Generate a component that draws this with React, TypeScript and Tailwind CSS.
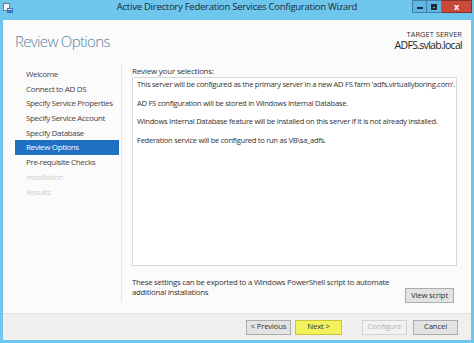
const navItems = [
  { label: "Welcome", state: "normal" },
  { label: "Connect to AD DS", state: "normal" },
  { label: "Specify Service Properties", state: "normal" },
  { label: "Specify Service Account", state: "normal" },
  { label: "Specify Database", state: "normal" },
  { label: "Review Options", state: "active" },
  { label: "Pre-requisite Checks", state: "normal" },
  { label: "Installation", state: "disabled" },
  { label: "Results", state: "disabled" },
];

const lines = [
  "This server will be configured as the primary server in a new AD FS farm 'adfs.virtuallyboring.com'.",
  "AD FS configuration will be stored in Windows Internal Database.",
  "Windows Internal Database feature will be installed on this server if it is not already installed.",
  "Federation service will be configured to run as VB\\sa_adfs.",
];

function AppIcon() {
  return (
    <svg width="10" height="10" viewBox="0 0 10 10">
      <rect x="0.5" y="0.5" width="6" height="7" fill="#f4f4f4" stroke="#6b7f95" />
      <rect x="4" y="5" width="6" height="5" fill="#3a78c4" />
      <rect x="5" y="6" width="4" height="1" fill="#cfe3f7" />
    </svg>
  );
}

export default function App() {
  return (
    <div
      className="w-[474px] h-[343px] bg-[#6ec6ec] flex flex-col overflow-hidden text-[#333]"
      style={{ fontFamily: '"Open Sans", "Noto Sans", sans-serif' }}
    >
      {/* Title bar */}
      <div className="h-[20px] flex items-start relative">
        <div className="pl-[3px] pt-[3px]">
          <AppIcon />
        </div>
        <div className="absolute inset-x-0 top-0 text-center text-[9.5px] tracking-[-0.25px] text-[#1c2a36] leading-[13px]">
          Active Directory Federation Services Configuration Wizard
        </div>
        <div className="ml-auto flex items-start pr-[2px]">
          <div className="w-[15px] h-[13px] bg-[#5fb6e0] border border-[#3c7fa8] flex items-end justify-center pb-[3px]">
            <div className="w-[6px] h-[2px] bg-[#1c2a36]" />
          </div>
          <div className="w-[15px] h-[13px] bg-[#5fb6e0] border border-l-0 border-[#3c7fa8] flex items-center justify-center">
            <div className="w-[6px] h-[6px] border-2 border-[#1c2a36] border-t-[3px]" />
          </div>
          <div className="w-[30px] h-[13px] bg-[#c9493a] border border-l-0 border-[#8a2e24] flex items-center justify-center text-white text-[9px] font-bold leading-none">
            x
          </div>
        </div>
      </div>

      {/* Window body */}
      <div className="flex-1 mx-[3px] mb-[3px] bg-[#fcfbfb] flex flex-col">
        {/* Header */}
        <div className="h-[42px] flex items-start justify-between">
          <div className="pl-[12px] pt-[11px] text-[15px] tracking-[-0.65px] leading-[20px] font-light text-[#5b84a3]">
            Review Options
          </div>
          <div className="pr-[9px] pt-[9px] text-right">
            <div className="text-[7.5px] leading-[10px] text-[#333]">TARGET SERVER</div>
            <div className="text-[10.5px] tracking-[-0.7px] leading-[13px] text-[#222]">ADFS.svlab.local</div>
          </div>
        </div>

        {/* Main */}
        <div className="flex-1 flex">
          <div className="w-[119px] shrink-0 pl-[12px] pt-[4px] border-r border-[#e4e4e4] mb-[11px] mt-[1px] pr-[2px]">
            {navItems.map((item) => (
              <div
                key={item.label}
                className={
                  "h-[14.7px] pl-[11px] text-[8px] tracking-[-0.35px] leading-[14.7px] whitespace-nowrap " +
                  (item.state === "active"
                    ? "bg-[#1f6fc2] text-white"
                    : item.state === "disabled"
                    ? "text-[#cfcfcf]"
                    : "text-[#444]")
                }
              >
                {item.label}
              </div>
            ))}
          </div>

          <div className="w-[335px] shrink-0 pl-[10px] flex flex-col">
            <div className="pt-[4px] text-[8px] tracking-[-0.2px] leading-[10px] text-[#333]">Review your selections:</div>
            <div className="mt-[1px] w-[325px] h-[189px] border border-[#d9d9d9] bg-white px-[4px] pt-[1px] flex flex-col gap-[7.5px] overflow-hidden">
              {lines.map((l) => (
                <div key={l} className="text-[7.6px] tracking-[-0.28px] leading-[11px] text-[#333] whitespace-nowrap">
                  {l}
                </div>
              ))}
            </div>
            <div className="mt-[12px] w-[325px] flex items-start justify-between">
              <div className="text-[7.8px] tracking-[-0.25px] leading-[9.5px] text-[#333]">
                These settings can be exported to a Windows PowerShell script to automate
                <br />
                additional installations
              </div>
              <button className="mt-[10px] mr-[3px] w-[49px] h-[15px] bg-[#e3e3e3] border border-[#acacac] text-[7.8px] tracking-[-0.2px] leading-none text-[#333]">
                View script
              </button>
            </div>
          </div>
        </div>

        {/* Footer */}
        <div className="h-[27px] bg-[#efefef] border-t border-[#e2e2e2] flex items-center justify-end pr-[13px]">
          <button className="w-[45px] h-[15px] bg-[#e3e3e3] border border-[#acacac] text-[7.8px] tracking-[-0.2px] leading-none text-[#333]">
            &lt; Previous
          </button>
          <button className="ml-[4px] w-[47px] h-[15px] bg-[#f2f25a] border border-[#c9c63a] text-[7.8px] tracking-[-0.2px] leading-none text-[#333]">
            Next &gt;
          </button>
          <button className="ml-[20px] w-[45px] h-[15px] bg-[#f2f2f2] border border-[#d2d2d2] text-[7.8px] tracking-[-0.2px] leading-none text-[#b5b5b5]">
            Configure
          </button>
          <button className="ml-[6px] w-[45px] h-[15px] bg-[#e3e3e3] border border-[#acacac] text-[7.8px] tracking-[-0.2px] leading-none text-[#333]">
            Cancel
          </button>
        </div>
      </div>
    </div>
  );
}
